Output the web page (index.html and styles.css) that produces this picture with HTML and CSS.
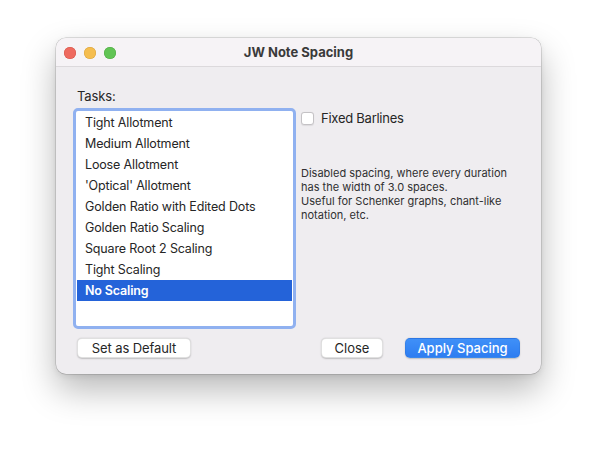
FILE: index.html
```html
<!DOCTYPE html>
<html>
<head>
<meta charset="utf-8">
<link rel="stylesheet" href="styles.css">
</head>
<body>
<div class="window">
  <div class="titlebar">
    <div class="lights">
      <span class="light red"></span>
      <span class="light yellow"></span>
      <span class="light green"></span>
    </div>
    <div class="title">JW Note Spacing</div>
  </div>
  <div class="content">
    <div class="label">Tasks:</div>
    <div class="main">
      <div class="listbox">
        <div class="list">
          <div class="row">Tight Allotment</div>
          <div class="row">Medium Allotment</div>
          <div class="row">Loose Allotment</div>
          <div class="row">'Optical' Allotment</div>
          <div class="row">Golden Ratio with Edited Dots</div>
          <div class="row">Golden Ratio Scaling</div>
          <div class="row">Square Root 2 Scaling</div>
          <div class="row">Tight Scaling</div>
          <div class="row selected">No Scaling</div>
        </div>
      </div>
      <div class="side">
        <label class="check"><span class="box"></span><span class="check-label">Fixed Barlines</span></label>
        <p class="desc">Disabled spacing, where every duration<br>has the width of 3.0 spaces.<br>Useful for Schenker graphs, chant-like<br>notation, etc.</p>
      </div>
    </div>
    <div class="buttons">
      <button class="btn default">Set as Default</button>
      <div class="spacer"></div>
      <button class="btn close">Close</button>
      <button class="btn primary">Apply Spacing</button>
    </div>
  </div>
</div>
</body>
</html>
```
FILE: styles.css
```css
html, body {
  margin: 0;
  padding: 0;
  background: #ffffff;
}
body {
  font-family: Inter, "Noto Sans", "Liberation Sans", sans-serif;
  font-size: 13px;
  color: #262626;
  width: 597px;
  height: 449px;
  overflow: hidden;
}
.window {
  margin: 38px 0 0 56px;
  width: 485px;
  height: 336px;
  border-radius: 10px;
  background: #efedf0;
  box-shadow: 0 0 0 0.5px rgba(0,0,0,0.22), 0 16px 34px rgba(0,0,0,0.28), 0 2px 6px rgba(0,0,0,0.08);
  display: flex;
  flex-direction: column;
  overflow: hidden;
}
.titlebar {
  height: 28px;
  flex: none;
  background: #f6f3f6;
  border-bottom: 1px solid #dcd9dc;
  display: flex;
  align-items: center;
  position: relative;
}
.lights {
  display: flex;
  gap: 8px;
  margin-left: 7.5px;
  margin-top: 1px;
}
.light {
  width: 12px;
  height: 12px;
  border-radius: 50%;
  display: block;
}
.red { background: #ee6a5f; box-shadow: inset 0 0 0 0.5px #d55246; }
.yellow { background: #f5bd4f; box-shadow: inset 0 0 0 0.5px #d9a13a; }
.green { background: #61c454; box-shadow: inset 0 0 0 0.5px #4ea840; }
.title {
  position: absolute;
  left: 0;
  right: 0;
  top: 0;
  line-height: 28px;
  text-align: center;
  font-weight: 700;
  font-size: 13px;
  color: #3a3a3a;
  pointer-events: none;
}
.content {
  padding: 21px 21px 0 17px;
  display: flex;
  flex-direction: column;
}
.label {
  margin-left: 4px;
  line-height: 16px;
  height: 16px;
  margin-bottom: 4px;
  letter-spacing: -0.1px;
}
.main {
  display: flex;
  gap: 5px;
}
.listbox {
  width: 223px;
  height: 221px;
  box-sizing: border-box;
  border: 3px solid #90b1f0;
  border-radius: 5px;
  background: #ffffff;
  flex: none;
}
.list {
  padding: 1px 1px 0 1px;
}
.row {
  height: 21px;
  line-height: 21px;
  padding-left: 8px;
  white-space: nowrap;
  font-size: 12.5px;
  letter-spacing: -0.15px;
}
.row.selected {
  background: #2463d9;
  color: #ffffff;
  font-weight: 600;
}
.side {
  display: flex;
  flex-direction: column;
}
.check {
  display: flex;
  align-items: center;
  margin-top: 3px;
  height: 14px;
}
.box {
  width: 13px;
  height: 13px;
  box-sizing: border-box;
  border-radius: 3px;
  background: #ffffff;
  border: 0.5px solid #c4c2c5;
  box-shadow: 0 0.5px 1px rgba(0,0,0,0.08);
}
.check-label {
  margin-left: 7px;
  line-height: 14px;
  letter-spacing: -0.25px;
}
.desc {
  margin: 41px 0 0 0;
  font-size: 11px;
  line-height: 14px;
  color: #303030;
}
.buttons {
  display: flex;
  margin-top: 9px;
  padding-left: 4px;
  align-items: center;
}
.spacer { flex: 1; }
.btn {
  font-family: inherit;
  font-size: 13px;
  height: 20px;
  border-radius: 5px;
  border: 0.5px solid rgba(0,0,0,0.12);
  background: #ffffff;
  color: #262626;
  box-shadow: 0 0.5px 1.5px rgba(0,0,0,0.2);
  padding: 0;
  line-height: 18px;
}
.default { width: 114px; letter-spacing: -0.1px; }
.close { width: 62px; margin-right: 22px; }
.primary {
  width: 115px;
  background: linear-gradient(#3f90f8, #2e7df1);
  border-color: rgba(0,0,0,0.05);
  color: #ffffff;
  font-weight: 500;
}
```
